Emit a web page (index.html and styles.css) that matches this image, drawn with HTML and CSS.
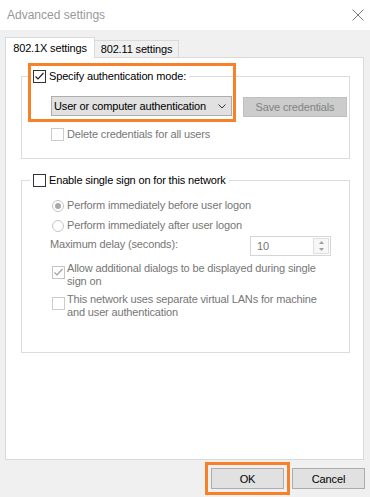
FILE: index.html
```html
<!DOCTYPE html>
<html>
<head>
<meta charset="utf-8">
<title>Advanced settings</title>
<link rel="stylesheet" href="styles.css">
</head>
<body>
<div class="titlebar">
  <span class="title">Advanced settings</span>
  <svg class="close" width="12" height="12" viewBox="0 0 12 12"><path d="M0.5 0.5 L11.5 11.5 M11.5 0.5 L0.5 11.5" stroke="#7a7a7a" stroke-width="1" fill="none"/></svg>
</div>
<div class="tabs">
  <div class="tab active">802.1X settings</div>
  <div class="tab inactive">802.11 settings</div>
</div>
<div class="panel">
  <div class="group g1">
    <div class="legend">
      <svg class="cb" width="13" height="13" viewBox="0 0 13 13"><rect x="0.5" y="0.5" width="12" height="12" fill="#fff" stroke="#333"/><path d="M2.5 6.5 L5 9 L10.5 3" fill="none" stroke="#222" stroke-width="1.2"/></svg>
      <span>Specify authentication mode:</span>
    </div>
    <div class="auth-row">
      <div class="select"><span>User or computer authentication</span><svg width="8" height="5" viewBox="0 0 8 5"><path d="M0.5 0.5 L4 4 L7.5 0.5" stroke="#333" fill="none"/></svg></div>
      <div class="btn disabled save">Save credentials</div>
    </div>
    <div class="opt del">
      <svg class="cb" width="13" height="13" viewBox="0 0 13 13"><rect x="0.5" y="0.5" width="12" height="12" fill="#fff" stroke="#cccccc"/></svg>
      <span>Delete credentials for all users</span>
    </div>
    <div class="hl hl-auth"></div>
  </div>
  <div class="group g2">
    <div class="legend">
      <svg class="cb" width="13" height="13" viewBox="0 0 13 13"><rect x="0.5" y="0.5" width="12" height="12" fill="#fff" stroke="#333"/></svg>
      <span>Enable single sign on for this network</span>
    </div>
    <div class="opt radio r1">
      <svg width="12" height="12" viewBox="0 0 12 12"><circle cx="6" cy="6" r="5.5" fill="#fff" stroke="#c4c4c4"/><circle cx="6" cy="6" r="3" fill="#a9a9a9"/></svg>
      <span>Perform immediately before user logon</span>
    </div>
    <div class="opt radio r2">
      <svg width="12" height="12" viewBox="0 0 12 12"><circle cx="6" cy="6" r="5.5" fill="#fff" stroke="#c4c4c4"/></svg>
      <span>Perform immediately after user logon</span>
    </div>
    <div class="delay-row">
      <span class="delay-label">Maximum delay (seconds):</span>
      <div class="spin">
        <span class="spin-val">10</span>
        <div class="spin-btns">
          <div class="sb"><svg width="5" height="3" viewBox="0 0 5 3"><path d="M0 3 L2.5 0 L5 3 Z" fill="#a0a0a0"/></svg></div>
          <div class="sb"><svg width="5" height="3" viewBox="0 0 5 3"><path d="M0 0 L2.5 3 L5 0 Z" fill="#a0a0a0"/></svg></div>
        </div>
      </div>
    </div>
    <div class="multi allow">
      <svg class="cb" width="13" height="13" viewBox="0 0 13 13"><rect x="0.5" y="0.5" width="12" height="12" fill="#fff" stroke="#c4c4c4"/><path d="M2.5 6.5 L5 9 L10.5 3" fill="none" stroke="#a0a0a0" stroke-width="1.2"/></svg>
      <span>Allow additional dialogs to be displayed during single<br>sign on</span>
    </div>
    <div class="multi vlan">
      <svg class="cb" width="13" height="13" viewBox="0 0 13 13"><rect x="0.5" y="0.5" width="12" height="12" fill="#fff" stroke="#cccccc"/></svg>
      <span>This network uses separate virtual LANs for machine<br>and user authentication</span>
    </div>
  </div>
</div>
<div class="buttons">
  <div class="btn-wrap">
    <div class="btn">OK</div>
    <div class="hl hl-ok"></div>
  </div>
  <div class="btn">Cancel</div>
</div>
</body>
</html>
```
FILE: styles.css
```css
* { box-sizing: border-box; }
html, body { margin: 0; padding: 0; }
body {
  width: 370px;
  height: 497px;
  overflow: hidden;
  background: #f0f0f0;
  font-family: "Liberation Sans", Arial, sans-serif;
  font-size: 11px;
  letter-spacing: -0.15px;
  color: #000;
}
.titlebar {
  height: 30px;
  background: #fff;
  display: flex;
  align-items: center;
  justify-content: space-between;
  padding: 0 6px 0 7px;
}
.title { font-size: 12px; letter-spacing: 0; color: #999; }
.close { display: block; }

.tabs {
  display: flex;
  height: 21px;
  margin: 7px 0 -1px 5px;
  position: relative;
  z-index: 1;
}
.tab {
  display: flex;
  align-items: center;
  justify-content: center;
  white-space: nowrap;
  line-height: 13px;
}
.tab.active {
  width: 90px;
  height: 21px;
  background: #fff;
  border: 1px solid #d9d9d9;
  border-bottom: none;
}
.tab.inactive {
  width: 84px;
  height: 17px;
  margin-top: 3px;
  background: #f0f0f0;
  border: 1px solid #d9d9d9;
  border-left: none;
  border-bottom: none;
}

.panel {
  margin-left: 5px;
  width: 359px;
  height: 403px;
  background: #fff;
  border: 1px solid #d9d9d9;
  padding-top: 18px;
}
.group {
  position: relative;
  border: 1px solid #dcdcdc;
  margin: 0 13px 0 15px;
  display: flex;
  flex-direction: column;
  align-items: flex-start;
}
.g1 { padding-bottom: 17px; }
.g2 { margin-top: 21px; padding-bottom: 33px; }
.legend {
  display: flex;
  align-items: center;
  gap: 3px;
  height: 13px;
  line-height: 13px;
  margin: -7px 0 0 8px;
  padding: 0 3px;
  background: #fff;
  white-space: nowrap;
  position: relative;
}
.cb { display: block; flex: none; }

.auth-row {
  display: flex;
  align-items: flex-start;
  gap: 11px;
  margin: 13px 0 0 29px;
}
.select {
  width: 181px;
  height: 20px;
  background: #e1e1e1;
  border: 1px solid #adadad;
  display: flex;
  align-items: center;
  justify-content: space-between;
  padding: 0 5px 0 2px;
  white-space: nowrap;
}
.select svg { display: block; }
.btn {
  width: 73px;
  height: 21px;
  background: #e1e1e1;
  border: 1px solid #adadad;
  display: flex;
  align-items: center;
  justify-content: center;
  white-space: nowrap;
}
.btn.save {
  width: 104px;
  height: 20px;
  margin-top: 1px;
  background: #cccccc;
  border-color: #bfbfbf;
  color: #838383;
}

.opt {
  display: flex;
  align-items: center;
  gap: 3px;
  white-space: nowrap;
  line-height: 13px;
  color: #767676;
}
.opt svg { display: block; flex: none; }
.del { margin: 11px 0 0 29px; }
.radio { margin-left: 30px; }
.r1 { margin-top: 12px; }
.r2 { margin-top: 7px; }

.delay-row {
  display: flex;
  align-items: flex-start;
  margin: 4px 0 0 28px;
}
.delay-label {
  width: 200px;
  margin-top: 2px;
  line-height: 13px;
  color: #767676;
  white-space: nowrap;
}
.spin {
  display: flex;
  width: 81px;
  height: 20px;
  border: 1px solid #d5d5d5;
  background: #fff;
}
.spin-val {
  flex: 1;
  padding-left: 6px;
  line-height: 18px;
  color: #767676;
}
.spin-btns {
  width: 16px;
  margin: 1px 1px 1px 0;
  display: flex;
  flex-direction: column;
  border: 1px solid #dedede;
  background: #f7f7f7;
}
.sb {
  flex: 1;
  display: flex;
  align-items: center;
  justify-content: center;
}
.sb svg { display: block; }

.multi {
  display: flex;
  align-items: flex-start;
  gap: 2px;
  line-height: 13px;
  color: #767676;
  margin-left: 30px;
  white-space: nowrap;
}
.multi .cb { margin-top: 4px; }
.allow { margin-top: 6px; }
.vlan { margin-top: 5px; }

.buttons {
  display: flex;
  justify-content: flex-end;
  gap: 8px;
  margin-top: 8px;
  padding-right: 5px;
}
.btn-wrap { position: relative; }

.hl {
  position: absolute;
  border: 3px solid #f68128;
  z-index: 2;
  pointer-events: none;
}
.hl-auth { left: 6px; top: -14px; width: 208px; height: 59px; }
.hl-ok { left: -6px; right: -6px; top: -6px; bottom: -6px; }
```
